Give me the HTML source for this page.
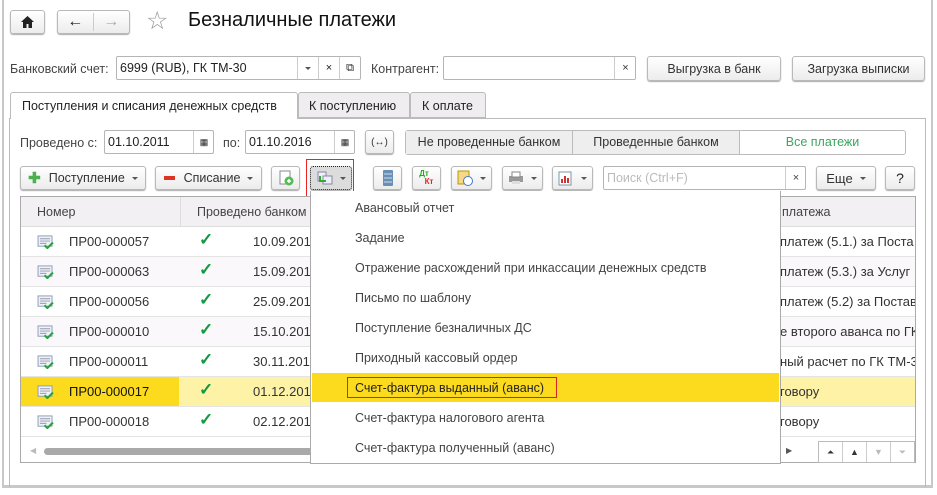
<!DOCTYPE html>
<html><head><meta charset="utf-8"><style>
*{box-sizing:border-box;margin:0;padding:0}
body{width:937px;height:495px;background:#fff;font-family:"Liberation Sans",Arial,sans-serif;font-size:12.5px;color:#333;position:relative;overflow:hidden}
.a{position:absolute}
.btn{position:absolute;border:1px solid #b9b9b9;border-radius:3px;background:linear-gradient(#fff,#ececec);box-shadow:0 1px 1px #aaa;display:flex;align-items:center;justify-content:center;color:#333;white-space:nowrap}
.inp{position:absolute;border:1px solid #b5b5b5;border-radius:2px;background:#fff;display:flex;align-items:center;padding-left:3px}
.dd{display:inline-block;width:0;height:0;border-left:3px solid transparent;border-right:3px solid transparent;border-top:3px solid #555;margin-left:7px}
.row{position:absolute;left:21px;width:894px;height:30px;border-bottom:1px solid #e4e4e4;overflow:hidden}
.row span{position:absolute;top:7px;font-size:13px;white-space:nowrap}
.row svg{position:absolute;left:16px;top:8px}
.mi{position:absolute;left:355px;font-size:12.5px;color:#444;white-space:nowrap}
</style></head><body>
<svg width="0" height="0" style="position:absolute"><defs><symbol id="di" viewBox="0 0 18 15"><rect x="1" y="1" width="15" height="11" fill="#eef2fa" stroke="#8a9ab5"/><path d="M3 4h11M3 6.5h11M3 9h7" stroke="#99a"/><path d="M8 11l3 3 6-6" stroke="#2aa040" stroke-width="2.2" fill="none"/></symbol></defs></svg>
<div class="a" style="left:2px;top:0;width:931px;height:488px;border-left:2px solid #c8c8c8;border-right:2px solid #c8c8c8;border-bottom:3px solid #c8c8c8"></div>
<div class="btn" style="left:10px;top:10px;width:35px;height:24px"><svg width="13" height="12"><path d="M6.5 0L0 6h2v6h3.5V8h2v4H11V6h2z" fill="#222"/></svg></div>
<div class="btn" style="left:57px;top:10px;width:73px;height:24px"><span style="font-size:16px;color:#222;width:36px;text-align:center;border-right:1px solid #ccc">&#8592;</span><span style="font-size:16px;color:#aaa;width:36px;text-align:center">&#8594;</span></div>
<div class="a" style="left:146px;top:6px;font-size:25px;color:#999">☆</div>
<div class="a" style="left:188px;top:9px;font-size:20px;color:#111">Безналичные платежи</div>

<div class="a" style="left:10px;top:62px;color:#444">Банковский счет:</div>
<div class="inp" style="left:116px;top:56px;width:245px;height:24px;color:#222">6999 (RUB), ГК ТМ-30
<span class="a" style="left:180px;top:0;height:22px;width:21px;border-left:1px solid #ccc;display:flex;align-items:center;justify-content:center"><i class="dd" style="margin:0"></i></span>
<span class="a" style="left:201px;top:0;height:22px;width:21px;border-left:1px solid #ccc;text-align:center;line-height:22px;font-size:11px">×</span>
<span class="a" style="left:222px;top:0;height:22px;width:21px;border-left:1px solid #ccc;text-align:center;line-height:22px;font-size:11px">⧉</span></div>
<div class="a" style="left:371px;top:62px;color:#444">Контрагент:</div>
<div class="inp" style="left:443px;top:56px;width:193px;height:24px"><span class="a" style="left:170px;top:0;height:22px;width:22px;border-left:1px solid #ccc;text-align:center;line-height:22px;font-size:11px">×</span></div>
<div class="btn" style="left:647px;top:56px;width:134px;height:25px">Выгрузка в банк</div>
<div class="btn" style="left:792px;top:56px;width:133px;height:25px">Загрузка выписки</div>

<div class="a" style="left:9px;top:118px;width:917px;height:369px;border:1px solid #bbb;border-bottom:none"></div>
<div class="a" style="left:10px;top:92px;width:288px;height:27px;border:1px solid #bbb;border-bottom:none;background:#fff;border-radius:3px 3px 0 0;padding:6px 0 0 11px;color:#222;white-space:nowrap">Поступления и списания денежных средств</div>
<div class="a" style="left:298px;top:92px;width:112px;height:26px;border:1px solid #bbb;background:#efedef;border-radius:3px 3px 0 0;padding:6px 0 0 10px;color:#222;white-space:nowrap">К поступлению</div>
<div class="a" style="left:410px;top:92px;width:76px;height:26px;border:1px solid #bbb;background:#efedef;border-radius:3px 3px 0 0;padding:6px 0 0 11px;color:#222">К оплате</div>

<div class="a" style="left:20px;top:136px;color:#444">Проведено с:</div>
<div class="inp" style="left:104px;top:130px;width:110px;height:24px;color:#222">01.10.2011<span class="a" style="left:88px;top:0;width:21px;height:22px;border-left:1px solid #ccc;text-align:center;line-height:22px;font-size:9px">▦</span></div>
<div class="a" style="left:223px;top:136px;color:#444">по:</div>
<div class="inp" style="left:245px;top:130px;width:110px;height:24px;color:#222">01.10.2016<span class="a" style="left:88px;top:0;width:21px;height:22px;border-left:1px solid #ccc;text-align:center;line-height:22px;font-size:9px">▦</span></div>
<div class="btn" style="left:365px;top:130px;width:29px;height:24px;font-size:10px">(↔)</div>
<div class="a" style="left:405px;top:130px;width:501px;height:25px;border:1px solid #bbb;border-radius:3px;display:flex">
<div style="width:167px;background:#eee;border-right:1px solid #bbb;text-align:center;line-height:23px">Не проведенные банком</div>
<div style="width:167px;background:#eee;border-right:1px solid #bbb;text-align:center;line-height:23px">Проведенные банком</div>
<div style="flex:1;text-align:center;line-height:23px;color:#3aa660">Все платежи</div></div>

<div class="btn" style="left:20px;top:166px;width:126px;height:24px"><b style="color:#4caf50;font-size:15px;margin-right:8px">✚</b>Поступление<i class="dd"></i></div>
<div class="btn" style="left:155px;top:166px;width:107px;height:24px"><span style="display:inline-block;width:11px;height:4px;background:#d32;margin-right:9px"></span>Списание<i class="dd"></i></div>
<div class="btn" style="left:271px;top:166px;width:29px;height:24px"><svg width="16" height="16"><rect x="2" y="1" width="10" height="13" fill="#fff" stroke="#889"/><circle cx="11" cy="11" r="4.5" fill="#5b5"/><path d="M9 11h4M11 9v4" stroke="#fff" stroke-width="1.5"/></svg></div>
<div class="btn" style="left:310px;top:166px;width:42px;height:24px;background:#dcdcdc;border:1px dotted #222"><svg width="16" height="14"><rect x="1" y="1" width="8" height="9" fill="#eef" stroke="#889"/><rect x="6" y="5" width="9" height="8" fill="#eef" stroke="#889"/><path d="M3 5v5h6" stroke="#3a3" stroke-width="2" fill="none"/></svg><i class="dd"></i></div>
<div class="a" style="left:306px;top:159px;width:48px;height:38px;border:1px solid #e22"></div>
<div class="btn" style="left:373px;top:166px;width:29px;height:24px"><svg width="10" height="16"><rect x="0" y="0" width="10" height="16" rx="1" fill="#6a8fb5"/><path d="M1 4h8M1 8h8M1 12h8" stroke="#cde"/></svg></div>
<div class="btn" style="left:412px;top:166px;width:29px;height:24px;font-size:8px;font-weight:bold;line-height:8px;flex-direction:column"><span style="color:#2a2;margin-right:5px">Дт</span><span style="color:#e22;margin-left:5px">Кт</span></div>
<div class="btn" style="left:451px;top:166px;width:41px;height:24px"><svg width="16" height="16"><rect x="1" y="1" width="11" height="13" fill="#f5d88a" stroke="#b90"/><circle cx="11" cy="11" r="4.5" fill="#fff" stroke="#47c"/></svg><i class="dd"></i></div>
<div class="btn" style="left:502px;top:166px;width:41px;height:24px"><svg width="16" height="14"><rect x="1" y="5" width="14" height="6" fill="#999"/><rect x="4" y="1" width="8" height="5" fill="#fff" stroke="#888"/><rect x="4" y="10" width="8" height="3" fill="#ddd"/></svg><i class="dd"></i></div>
<div class="btn" style="left:552px;top:166px;width:41px;height:24px"><svg width="16" height="15"><rect x="1" y="1" width="12" height="13" fill="#fff" stroke="#79a"/><path d="M4 12v-4M7 12v-7M10 12v-5" stroke="#c33" stroke-width="2"/></svg><i class="dd"></i></div>
<div class="inp" style="left:603px;top:166px;width:203px;height:24px;color:#bbb">Поиск (Ctrl+F)<span class="a" style="left:181px;top:0;width:21px;height:22px;border-left:1px solid #ccc;text-align:center;line-height:22px;font-size:11px;color:#444">×</span></div>
<div class="btn" style="left:816px;top:166px;width:60px;height:24px;font-size:13px">Еще<i class="dd"></i></div>
<div class="btn" style="left:885px;top:166px;width:30px;height:24px;font-size:14px;color:#222">?</div>

<div class="a" style="left:20px;top:196px;width:896px;height:267px;border:1px solid #aaa"></div>
<div class="a" style="left:21px;top:197px;width:894px;height:30px;background:#f2f0f2;border-bottom:1px solid #ddd"><span class="a" style="left:16px;top:8px;color:#444">Номер</span><span class="a" style="left:159px;top:0;height:29px;border-left:1px solid #ddd"></span><span class="a" style="left:176px;top:8px;color:#444">Проведено банком</span><span class="a" style="left:761px;top:8px;color:#444">платежа</span></div>

<div class="row" style="top:227px;background:#fff"><svg width="17" height="14"><use href="#di"/></svg><span style="left:48px">ПР00-000057</span><span style="left:178px;color:#129a40;font-size:17px;top:3px;font-weight:bold">✓</span><span style="left:232px">10.09.201</span><span style="left:759px">платеж (5.1.) за Поста</span></div>
<div class="row" style="top:257px;background:#fbf8fb"><svg width="17" height="14"><use href="#di"/></svg><span style="left:48px">ПР00-000063</span><span style="left:178px;color:#129a40;font-size:17px;top:3px;font-weight:bold">✓</span><span style="left:232px">15.09.201</span><span style="left:759px">платеж (5.3.) за Услуг</span></div>
<div class="row" style="top:287px;background:#fff"><svg width="17" height="14"><use href="#di"/></svg><span style="left:48px">ПР00-000056</span><span style="left:178px;color:#129a40;font-size:17px;top:3px;font-weight:bold">✓</span><span style="left:232px">25.09.201</span><span style="left:759px">платеж (5.2) за Постав</span></div>
<div class="row" style="top:317px;background:#fbf8fb"><svg width="17" height="14"><use href="#di"/></svg><span style="left:48px">ПР00-000010</span><span style="left:178px;color:#129a40;font-size:17px;top:3px;font-weight:bold">✓</span><span style="left:232px">15.10.201</span><span style="left:759px">е второго аванса по ГК</span></div>
<div class="row" style="top:347px;background:#fff"><svg width="17" height="14"><use href="#di"/></svg><span style="left:48px">ПР00-000011</span><span style="left:178px;color:#129a40;font-size:17px;top:3px;font-weight:bold">✓</span><span style="left:232px">30.11.201</span><span style="left:759px">ный расчет по ГК ТМ-3</span></div>
<div class="row" style="top:377px;background:#fdf2a6"><div class="a" style="left:0;top:0;width:158px;height:29px;background:#fcdb1e"></div><svg width="17" height="14"><use href="#di"/></svg><span style="left:48px;color:#111">ПР00-000017</span><span style="left:178px;color:#129a40;font-size:17px;top:3px;font-weight:bold">✓</span><span style="left:232px">01.12.201</span><span style="left:759px">говору</span></div>
<div class="row" style="top:407px;background:#fff"><svg width="17" height="14"><use href="#di"/></svg><span style="left:48px">ПР00-000018</span><span style="left:178px;color:#129a40;font-size:17px;top:3px;font-weight:bold">✓</span><span style="left:232px">02.12.201</span><span style="left:759px">говору</span></div>
<div class="a" style="left:44px;top:448px;width:270px;height:7px;border-radius:4px;background:#a9a9a9"></div>
<div class="a" style="left:30px;top:446px;font-size:8px;color:#bbb">◀</div>
<div class="a" style="left:786px;top:446px;font-size:8px;color:#555">▶</div>
<div class="a" style="left:818px;top:441px;width:97px;height:22px;border:1px solid #bbb;display:flex;font-size:9px">
<div style="flex:1;border-right:1px solid #ccc;text-align:center;line-height:20px;color:#333">⏶</div><div style="flex:1;border-right:1px solid #ccc;text-align:center;line-height:20px;color:#333">▲</div><div style="flex:1;border-right:1px solid #ccc;text-align:center;line-height:20px;color:#bbb">▼</div><div style="flex:1;text-align:center;line-height:20px;color:#bbb">⏷</div></div>

<div class="a" style="left:310px;top:191px;width:471px;height:273px;background:#fff;border:1px solid #aaa;border-top:none"></div>
<div class="a" style="left:312px;top:373px;width:467px;height:29px;background:#fcdb1e"></div>
<div class="a" style="left:347px;top:377px;width:210px;height:21px;border:1px solid #d22"></div>
<div class="mi" style="top:201px">Авансовый отчет</div>
<div class="mi" style="top:231px">Задание</div>
<div class="mi" style="top:261px">Отражение расхождений при инкассации денежных средств</div>
<div class="mi" style="top:291px">Письмо по шаблону</div>
<div class="mi" style="top:321px">Поступление безналичных ДС</div>
<div class="mi" style="top:351px">Приходный кассовый ордер</div>
<div class="mi" style="top:381px;color:#222">Счет-фактура выданный (аванс)</div>
<div class="mi" style="top:411px">Счет-фактура налогового агента</div>
<div class="mi" style="top:441px">Счет-фактура полученный (аванс)</div>
</body></html>
